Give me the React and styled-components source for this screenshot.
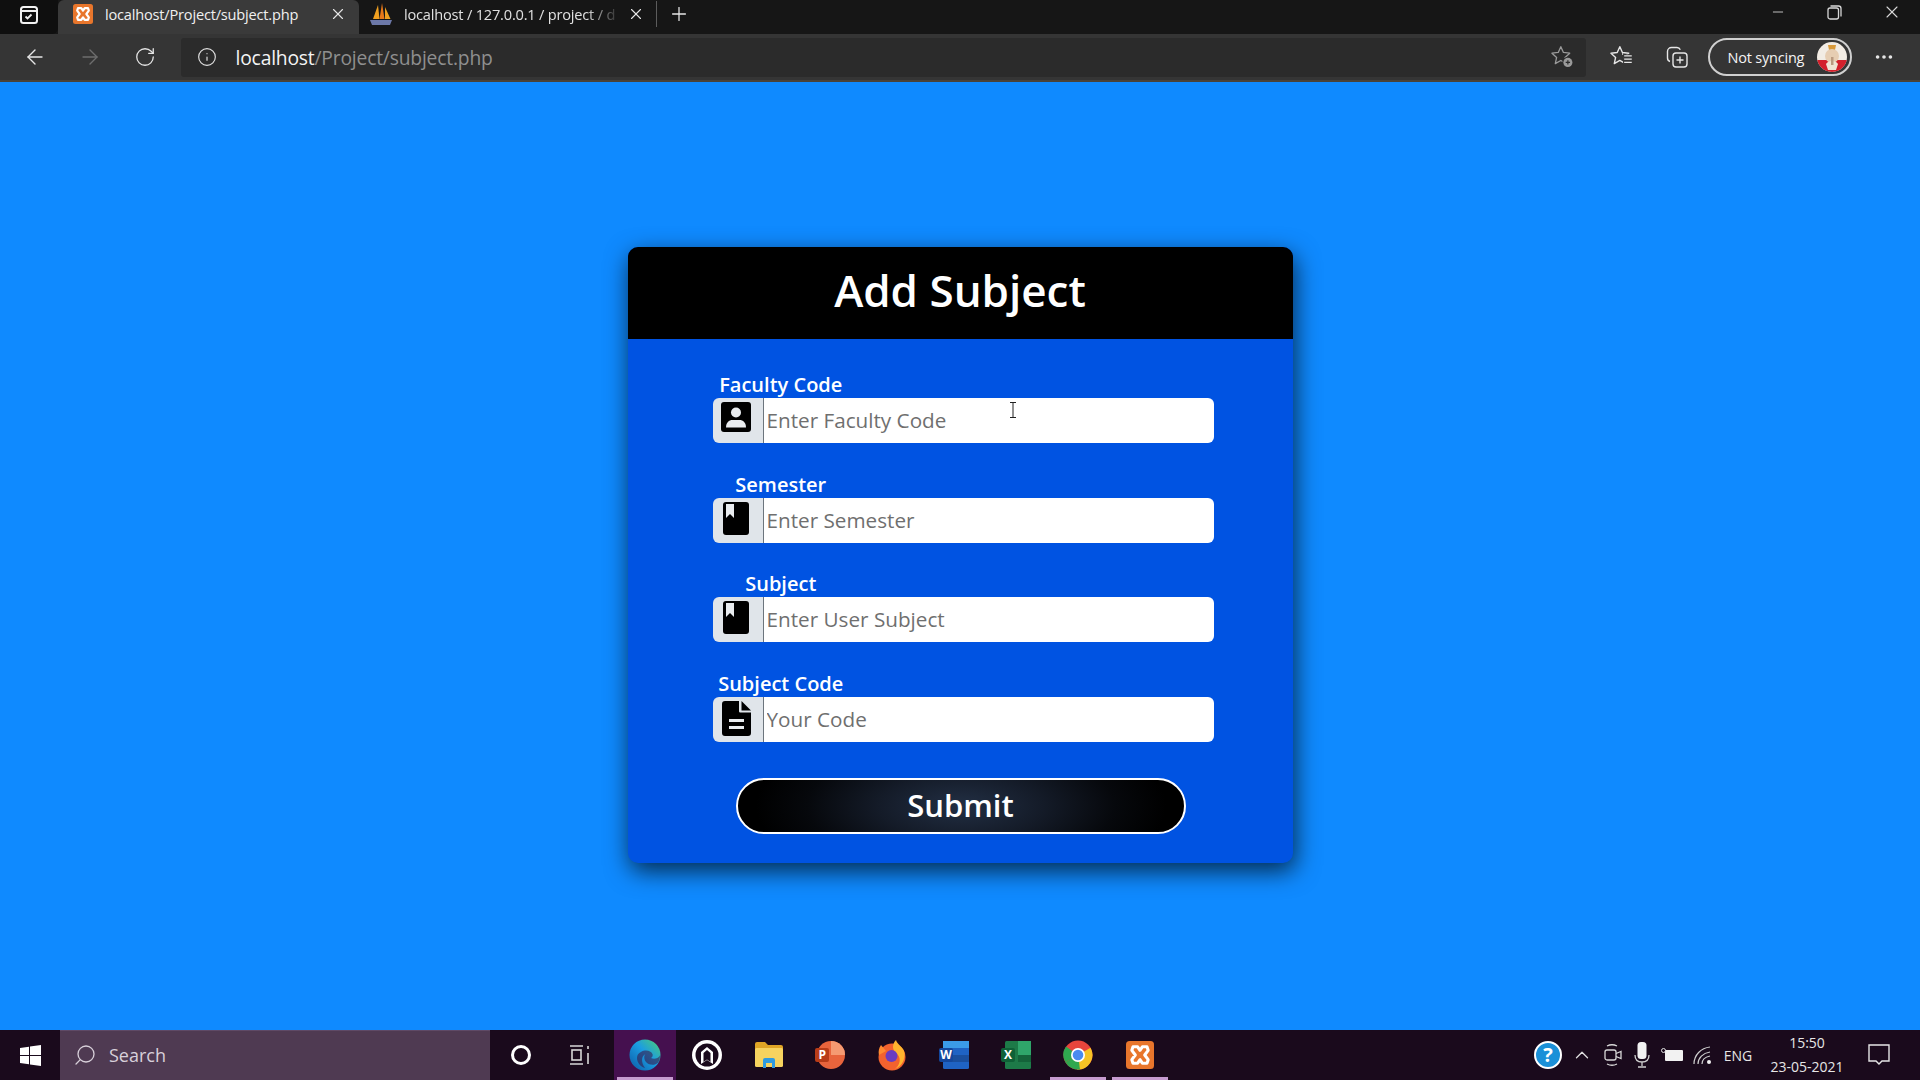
import React from 'react'
import styled, { createGlobalStyle } from 'styled-components'
import { ArrowLeft, ArrowRight, RotateCw, Info, X, Plus, Minus, ChevronUp, MoreHorizontal, Search } from 'lucide-react'

const GlobalStyle = createGlobalStyle`
  html, body { margin: 0; padding: 0; height: 100%; }
  body { font-family: "Open Sans", "Liberation Sans", sans-serif; background: #0f8aff; overflow: hidden; }
  #root { height: 100%; }
  * { box-sizing: border-box; }
`

const STAR = 'M10 2.500l2.400 5.300 5.800.7-4.300 3.900 1.200 5.700L10 15.200l-5.100 2.900 1.200-5.700L1.800 8.500l5.800-.7z'

function XamppIcon({ size = 20 }) {
  return (
    <svg width={size} height={size} viewBox="0 0 24 24">
      <rect x="0" y="0" width="24" height="24" rx="3" fill="#e8762c" />
      <path d="M6 5h4l2 3 2-3h4l1 3-3 4 3 4-1 3h-4l-2-3-2 3H6l-1-3 3-4-3-4z" fill="none" stroke="#fff" strokeWidth="2.6" strokeLinejoin="round" />
    </svg>
  )
}

function PmaIcon() {
  return (
    <svg width="22" height="22" viewBox="0 0 22 22">
      <path d="M3 16 8 2l1.500 14z" fill="#f0a020" />
      <path d="M9.500 16 12 0l2.500 16z" fill="#e87818" />
      <path d="M15 16 15 4l5.500 12z" fill="#f0a020" />
      <path d="M0 17h22l-2 5H2z" fill="#6c78a8" />
    </svg>
  )
}

function StarAddIcon() {
  return (
    <svg width="26" height="26" viewBox="0 0 24 24" fill="none" stroke="#9a9a9a" strokeWidth="1.200" strokeLinejoin="round">
      <path d={STAR} />
      <circle cx="16.500" cy="17" r="5.200" fill="#2b2b2b" stroke="none" />
      <circle cx="16.500" cy="17" r="4.200" fill="#9a9a9a" stroke="none" />
      <path d="M14.500 17h4M16.500 15v4" stroke="#2b2b2b" strokeWidth="1.100" />
    </svg>
  )
}

function FavoritesIcon() {
  return (
    <svg width="26" height="26" viewBox="0 0 24 24" fill="none" stroke="#e6e6e6" strokeWidth="1.300" strokeLinejoin="round">
      <path d={STAR} />
      <rect x="13" y="9.500" width="10" height="10" fill="#353535" stroke="none" />
      <path d="M14 11h7M14 14h7M14 17h7" />
      <path d="M12 9.200h1" />
    </svg>
  )
}

function CollectionsIcon() {
  return (
    <svg width="24" height="24" viewBox="0 0 24 24" fill="none" stroke="#e6e6e6" strokeWidth="1.400">
      <rect x="8" y="8" width="14" height="14" rx="3" />
      <path d="M15 11.500v7M11.500 15h7" />
      <path d="M5 16.500C3.500 16 2.500 14.800 2.500 13V6.500c0-2.200 1.800-4 4-4H12c1.500 0 2.700.8 3.300 2.200" />
    </svg>
  )
}

function RestoreIcon() {
  return (
    <svg width="15" height="15" viewBox="0 0 15 15" fill="none" stroke="#d8d8d8" strokeWidth="1.300">
      <rect x="1" y="3" width="10.500" height="11" rx="2" />
      <path d="M3.500 1h8c1.500 0 2.500 1 2.500 2.500v8" />
    </svg>
  )
}

function TabActionsIcon() {
  return (
    <svg width="18" height="18" viewBox="0 0 18 18">
      <rect x="1" y="1" width="16" height="16" rx="2.500" fill="none" stroke="#f2f2f2" strokeWidth="2" />
      <path d="M1 5h16" stroke="#f2f2f2" strokeWidth="2" />
      <path d="M5.500 10.500l2 2 4-4" fill="none" stroke="#f2f2f2" strokeWidth="1.800" />
    </svg>
  )
}

function ContactIcon() {
  return (
    <svg width="30" height="30" viewBox="0 0 30 30">
      <rect width="30" height="30" rx="3" fill="#000" />
      <circle cx="15" cy="10.500" r="5" fill="#e9ecef" />
      <path d="M5 25.500c0-5 3-7.500 6.500-7.500h7c3.500 0 6.500 2.500 6.500 7.500z" fill="#e9ecef" />
    </svg>
  )
}

function BookIcon() {
  return (
    <svg width="26" height="33" viewBox="0 0 26 33">
      <rect width="26" height="33" rx="3" fill="#000" />
      <path d="M3 2h8v14l-4-4-4 4z" fill="#e9ecef" />
    </svg>
  )
}

function FileIcon() {
  return (
    <svg width="29" height="35" viewBox="0 0 29 35">
      <path d="M3 0h14v10c0 1 .6 1.600 1.600 1.600H29V32a3 3 0 0 1-3 3H3a3 3 0 0 1-3-3V3a3 3 0 0 1 3-3z" fill="#000" />
      <path d="M19.500 0 29 9.500h-9.500z" fill="#000" />
      <path d="M7 18h15v3H7zM7 25h15v3H7z" fill="#e9ecef" />
    </svg>
  )
}

function EdgeIcon() {
  return (
    <svg width="32" height="32" viewBox="0 0 32 32">
      <defs>
        <linearGradient id="edgeA" x1="0" y1="1" x2="1" y2="0">
          <stop offset="0" stopColor="#0c59a4" />
          <stop offset=".55" stopColor="#1b9de2" />
          <stop offset="1" stopColor="#4fcf70" />
        </linearGradient>
      </defs>
      <circle cx="16" cy="16" r="15.500" fill="url(#edgeA)" />
      <path d="M12 13c4-2.500 10-1.500 11.500 2 .6 1.500 0 3-1.500 4 2.500 1.500 7 1 9-2.500 0 4-1.500 7-3 8-3 2-8 1.500-10.500-1-2.500-2.500-3-6.500-1-8.500-2 1-3.500 3-3.500 6 0 3 1.500 6 3 8-4-1-8-5-8-10 0-3 1.500-5 4-6z" fill="#3a1040" opacity=".55" />
    </svg>
  )
}

function GitIcon() {
  return (
    <svg width="32" height="32" viewBox="0 0 32 32">
      <circle cx="16" cy="16" r="15" fill="#fff" />
      <circle cx="16" cy="16" r="11.500" fill="#1a0a1c" />
      <path d="M10 25V13l6-5 6 5v12l-6-4z" fill="#fff" />
      <path d="M12.500 23V14l3.500-3 3.500 3v9L16 20.500z" fill="#1a0a1c" />
    </svg>
  )
}

function FolderIcon() {
  return (
    <svg width="30" height="28" viewBox="0 0 30 28">
      <path d="M1 3a2 2 0 0 1 2-2h8l3 3h13a2 2 0 0 1 2 2v3H1z" fill="#e0a526" />
      <rect x="1" y="7" width="28" height="19" rx="1.500" fill="#f7d35f" />
      <path d="M9 27v-8a2 2 0 0 1 2-2h8a2 2 0 0 1 2 2v8h-3v-5h-6v5z" fill="#2f9be0" />
    </svg>
  )
}

const AppLetter = styled.span`
  position: absolute;
  left: ${p => p.$left}px;
  top: 50%;
  transform: translateY(-50%);
  width: 14px;
  height: 14px;
  font-size: 12px;
  font-weight: 700;
  line-height: 14px;
  text-align: center;
  color: #fff;
  background: ${p => p.$bg};
  border-radius: 2px;
`

const OfficeBox = styled.div`
  position: relative;
  width: 30px;
  height: 30px;
`

function PowerPointIcon() {
  return (
    <OfficeBox>
      <svg width="30" height="30" viewBox="0 0 30 30">
        <circle cx="16" cy="15" r="14" fill="#e8643c" />
        <path d="M16 1a14 14 0 0 1 14 14H16z" fill="#f59a72" />
      </svg>
      <AppLetter $left={0} $bg="#b83c18">P</AppLetter>
    </OfficeBox>
  )
}

function WordIcon() {
  return (
    <OfficeBox>
      <svg width="30" height="30" viewBox="0 0 30 30">
        <rect x="4" y="1" width="26" height="28" rx="1.500" fill="#1f63c4" />
        <rect x="4" y="1" width="26" height="7" fill="#3b9be8" />
        <rect x="4" y="15" width="26" height="7" fill="#1a4f9e" />
      </svg>
      <AppLetter $left={0} $bg="#14479c">W</AppLetter>
    </OfficeBox>
  )
}

function ExcelIcon() {
  return (
    <OfficeBox>
      <svg width="30" height="30" viewBox="0 0 30 30">
        <rect x="4" y="1" width="26" height="28" rx="1.500" fill="#1d7a48" />
        <rect x="17" y="1" width="13" height="14" fill="#2fa56a" />
        <rect x="17" y="15" width="13" height="7" fill="#14633a" />
      </svg>
      <AppLetter $left={0} $bg="#0f6137">X</AppLetter>
    </OfficeBox>
  )
}

function FirefoxIcon() {
  return (
    <svg width="32" height="32" viewBox="0 0 32 32">
      <circle cx="16" cy="18" r="13.500" fill="#f2622e" />
      <path d="M20 1c1 4 6 6 8 11 2 6-1 15-9 18 5-4 6-10 3-14-2-3-5-4-5-8 0-3 1-5 3-7z" fill="#ffb52e" />
      <path d="M5 6c-2 3-3 6-2 10l7-4z" fill="#ff8a30" />
      <circle cx="15.500" cy="17" r="6" fill="#6a3cc0" />
    </svg>
  )
}

function ChromeIcon() {
  return (
    <svg width="30" height="30" viewBox="0 0 30 30">
      <circle cx="15" cy="15" r="14.500" fill="#e8453c" />
      <path d="M15 15 2.400 22.200A14.500 14.500 0 0 1 3 6.500z" fill="#2fa84f" />
      <path d="M15 15 27.500 7.800A14.500 14.500 0 0 1 14 29.500z" fill="#f7c325" />
      <path d="M15 15 2.400 22.200A14.500 14.500 0 0 0 17 29.400z" fill="#2fa84f" />
      <circle cx="15" cy="15" r="7" fill="#fff" />
      <circle cx="15" cy="15" r="5.300" fill="#4a8bf0" />
    </svg>
  )
}

function WindowsIcon() {
  return (
    <svg width="21" height="21" viewBox="0 0 21 21" fill="#fff">
      <path d="M0 3 9 1.700V10H0zM10 1.500 21 0v10H10zM0 11h9v8.300L0 18zM10 11h11v10l-11-1.500z" />
    </svg>
  )
}

function TaskViewIcon() {
  return (
    <svg width="22" height="22" viewBox="0 0 22 22" fill="none" stroke="#d8d8d8" strokeWidth="1.600">
      <path d="M1 2h13M1 20h13" />
      <rect x="3" y="6" width="9" height="10" />
      <path d="M19 2v3M19 9v11" />
    </svg>
  )
}

function CameraIcon() {
  return (
    <svg width="18" height="24" viewBox="0 0 18 24" fill="none" stroke="#d8d8d8" strokeWidth="1.300">
      <path d="M3 3c3-1.500 7-1.500 10 0M3 21c3 1.500 7 1.500 10 0" />
      <rect x="1" y="7" width="11" height="10" rx="2" />
      <path d="M12 10.500l5-2v7l-5-2" />
    </svg>
  )
}

function MicIcon() {
  return (
    <svg width="16" height="26" viewBox="0 0 16 26">
      <rect x="3.500" y="0" width="9" height="17" rx="3.500" fill="#f2f2f2" />
      <path d="M1 13c0 5 3 7 7 7s7-2 7-7M8 20v4M4 25h8" fill="none" stroke="#cfcfcf" strokeWidth="1.300" />
    </svg>
  )
}

function BatteryIcon() {
  return (
    <svg width="22" height="14" viewBox="0 0 22 14">
      <rect x="4" y="2" width="18" height="11" rx="1" fill="#f2f2f2" />
      <circle cx="2.500" cy="2.500" r="2" fill="none" stroke="#e0e0e0" />
    </svg>
  )
}

function WifiIcon() {
  return (
    <svg width="20" height="20" viewBox="0 0 20 20" fill="none" stroke="#cfcfcf" strokeWidth="1.200">
      <path d="M1 19C1 10 8 3 17 2M5 19c0-6 5-11 12-12M9 19c0-4 3-7 8-8" />
      <circle cx="16" cy="17" r="2" fill="#f2f2f2" stroke="none" />
    </svg>
  )
}

function NotificationIcon() {
  return (
    <svg width="22" height="22" viewBox="0 0 22 22" fill="none" stroke="#e6e6e6" strokeWidth="1.400">
      <path d="M1 1h20v16h-7l-3 3-3-3H1z" />
    </svg>
  )
}

function AvatarPicture() {
  return (
    <svg width="30" height="30" viewBox="0 0 30 30">
      <clipPath id="avatarClip"><circle cx="15" cy="15" r="15" /></clipPath>
      <g clipPath="url(#avatarClip)">
        <rect width="30" height="30" fill="#f2ece4" />
        <rect y="18" width="30" height="12" fill="#d3202c" />
        <path d="M11 3h8l-1 5h-6z" fill="#d99a3a" />
        <ellipse cx="15" cy="14" rx="7" ry="7" fill="#e6cdb2" />
        <path d="M9 22c2-4 10-4 12 0l-2 6h-8z" fill="#efe4d4" />
        <path d="M14 15h2.500v8H14z" fill="#b99a80" />
      </g>
    </svg>
  )
}

function TextCursor() {
  return (
    <svg width="8" height="16" viewBox="0 0 8 16" fill="none" stroke="#222" strokeWidth="1">
      <path d="M1 .5h6M1 15.500h6M4 .5v15" />
    </svg>
  )
}

function App() {
  const fields = [
    { label: 'Faculty Code', placeholder: 'Enter Faculty Code', icon: <ContactIcon />, cursor: true },
    { label: 'Semester', placeholder: 'Enter Semester', icon: <BookIcon /> },
    { label: 'Subject', placeholder: 'Enter User Subject', icon: <BookIcon /> },
    { label: 'Subject Code', placeholder: 'Your Code', icon: <FileIcon /> },
  ]

  return (
    <>
      <GlobalStyle />
      <Page>
        <TabStrip>
          <TabActions><TabActionsIcon /></TabActions>
          <ActiveTab>
            <XamppIcon />
            <TabTitle>localhost/Project/subject.php</TabTitle>
            <TabClose><X size={18} strokeWidth={1.5} /></TabClose>
          </ActiveTab>
          <OtherTab>
            <PmaIcon />
            <TabTitle $faded>localhost / 127.0.0.1 / project / d</TabTitle>
            <TabClose><X size={18} strokeWidth={1.5} /></TabClose>
          </OtherTab>
          <TabDivider />
          <NewTab><Plus size={22} strokeWidth={1.4} /></NewTab>
          <WindowControls>
            <WindowButton><Minus size={16} strokeWidth={1.3} /></WindowButton>
            <WindowButton><RestoreIcon /></WindowButton>
            <WindowButton><X size={20} strokeWidth={1.3} /></WindowButton>
          </WindowControls>
        </TabStrip>

        <Toolbar>
          <NavButton><ArrowLeft size={24} strokeWidth={1.4} /></NavButton>
          <NavButton $muted><ArrowRight size={24} strokeWidth={1.4} /></NavButton>
          <NavButton><RotateCw size={22} strokeWidth={1.4} /></NavButton>
          <AddressBar>
            <Info size={20} strokeWidth={1.4} color="#e0e0e0" />
            <Url><b>localhost</b>/Project/subject.php</Url>
            <StarAddIcon />
          </AddressBar>
          <ToolIcon $left={9}><FavoritesIcon /></ToolIcon>
          <ToolIcon><CollectionsIcon /></ToolIcon>
          <SyncPill>
            <span>Not syncing</span>
            <AvatarPicture />
          </SyncPill>
          <ToolIcon><MoreHorizontal size={22} strokeWidth={2} color="#e6e6e6" /></ToolIcon>
        </Toolbar>

        <Main>
          <Card>
            <CardHeader>Add Subject</CardHeader>
            <Form onSubmit={e => e.preventDefault()}>
              {fields.map(f => (
                <Field key={f.label}>
                  <FieldLabel>{f.label}</FieldLabel>
                  <InputGroup>
                    <Addon>{f.icon}</Addon>
                    <TextInput type="text" placeholder={f.placeholder} />
                    {f.cursor && <CursorMark><TextCursor /></CursorMark>}
                  </InputGroup>
                </Field>
              ))}
              <SubmitButton type="submit">Submit</SubmitButton>
            </Form>
          </Card>
        </Main>

        <Taskbar>
          <StartButton><WindowsIcon /></StartButton>
          <SearchBox>
            <SearchGlyph><Search size={24} strokeWidth={1.3} color="#d8d0da" /></SearchGlyph>
            Search
          </SearchBox>
          <TaskButton><Cortana /></TaskButton>
          <TaskButton $narrow><TaskViewIcon /></TaskButton>
          <TaskButton $active $open><EdgeIcon /></TaskButton>
          <TaskButton><GitIcon /></TaskButton>
          <TaskButton><FolderIcon /></TaskButton>
          <TaskButton><PowerPointIcon /></TaskButton>
          <TaskButton><FirefoxIcon /></TaskButton>
          <TaskButton><WordIcon /></TaskButton>
          <TaskButton><ExcelIcon /></TaskButton>
          <TaskButton $open><ChromeIcon /></TaskButton>
          <TaskButton $open><XamppIcon size={28} /></TaskButton>
          <Tray>
            <TrayCell $w={36}><HelpBadge>?</HelpBadge></TrayCell>
            <TrayCell $w={32}><ChevronUp size={22} strokeWidth={1.4} color="#e0e0e0" /></TrayCell>
            <TrayCell $w={30}><CameraIcon /></TrayCell>
            <TrayCell $w={27}><MicIcon /></TrayCell>
            <TrayCell $w={34}><BatteryIcon /></TrayCell>
            <TrayCell $w={28}><WifiIcon /></TrayCell>
            <TrayCell $w={42}>ENG</TrayCell>
            <Clock><span>15:50</span><span>23-05-2021</span></Clock>
            <TrayCell $w={48}><NotificationIcon /></TrayCell>
          </Tray>
        </Taskbar>
      </Page>
    </>
  )
}

export default App

const Page = styled.div`
  display: flex;
  flex-direction: column;
  height: 1080px;
`

const TabStrip = styled.div`
  display: flex;
  align-items: stretch;
  height: 34px;
  background: #161616;
  flex: none;
`

const TabActions = styled.div`
  width: 58px;
  display: flex;
  align-items: center;
  justify-content: center;
  padding-bottom: 4px;
  background: #0f0f0f;
  border-bottom-right-radius: 6px;
`

const ActiveTab = styled.div`
  width: 301px;
  display: flex;
  align-items: center;
  padding: 0 11px 6px 15px;
  background: #3a3a3a;
  border-radius: 6px 6px 0 0;
  color: #f0f0f0;
`

const OtherTab = styled.div`
  width: 297px;
  display: flex;
  align-items: center;
  padding: 0 10px 6px 11px;
  color: #e0e0e0;
`

const TabTitle = styled.span`
  flex: 1;
  margin-left: 12px;
  font-size: 14.6px;
  white-space: nowrap;
  overflow: hidden;
  letter-spacing: -0.2px;
  ${p => p.$faded && `
    -webkit-mask-image: linear-gradient(to right, #000 82%, transparent 98%);
    mask-image: linear-gradient(to right, #000 82%, transparent 98%);
  `}
`

const TabClose = styled.span`
  display: flex;
  width: 20px;
  justify-content: center;
  color: #e6e6e6;
`

const TabDivider = styled.div`
  width: 1px;
  height: 26px;
  margin-top: 1px;
  background: #5c5c5c;
`

const NewTab = styled.div`
  width: 44px;
  display: flex;
  align-items: center;
  justify-content: center;
  padding-bottom: 6px;
  color: #e6e6e6;
`

const WindowControls = styled.div`
  margin-left: auto;
  display: flex;
  padding-right: 0;
`

const WindowButton = styled.div`
  width: 57px;
  display: flex;
  align-items: center;
  justify-content: center;
  padding-bottom: 10px;
  color: #d8d8d8;
`

const Toolbar = styled.div`
  display: flex;
  align-items: center;
  height: 48px;
  padding: 0 9px 0 8px;
  background: #353535;
  border-bottom: 2px solid #4a4238;
  flex: none;
`

const NavButton = styled.div`
  width: 55px;
  display: flex;
  justify-content: center;
  color: ${p => (p.$muted ? '#6e6e6e' : '#e6e6e6')};
`

const AddressBar = styled.div`
  width: 1409px;
  height: 39px;
  margin-left: 8px;
  display: flex;
  align-items: center;
  padding: 0 10px 0 16px;
  background: #2b2b2b;
  border-radius: 3px;
`

const Url = styled.div`
  flex: 1;
  margin-left: 19px;
  font-size: 19.300px;
  letter-spacing: -0.2px;
  color: #8f8f8f;

  b {
    font-weight: 400;
    color: #f4f4f4;
  }
`

const ToolIcon = styled.div`
  width: 55px;
  display: flex;
  justify-content: center;
  margin-left: ${p => p.$left || 0}px;
`

const SyncPill = styled.div`
  width: 144px;
  height: 38px;
  margin: 0 4px;
  display: flex;
  align-items: center;
  justify-content: space-between;
  padding: 0 3px 0 17px;
  border: 2px solid #d0d0d0;
  border-radius: 19px;
  font-size: 14.5px;
  letter-spacing: -0.2px;
  color: #f4f4f4;
`

const Main = styled.main`
  flex: 1;
  display: flex;
  align-items: center;
  justify-content: center;
  padding-bottom: 2px;
  background: #0f8aff;
`

const Card = styled.section`
  width: 665px;
  height: 616px;
  border-radius: 10px;
  overflow: hidden;
  background: #0053e2;
  box-shadow: 2px 8px 24px rgba(0, 0, 0, 0.7);
`

const CardHeader = styled.h1`
  margin: 0;
  height: 92px;
  display: flex;
  align-items: center;
  justify-content: center;
  padding-bottom: 7px;
  background: #000;
  color: #fff;
  font-size: 44px;
  font-weight: 600;
`

const Form = styled.form`
  display: flex;
  flex-direction: column;
  padding: 30px 79px 0 85px;
`

const Field = styled.div`
  margin-bottom: 25.7px;
`

const FieldLabel = styled.label`
  display: block;
  width: 136.500px;
  height: 29px;
  line-height: 31px;
  text-align: center;
  white-space: nowrap;
  color: #fff;
  font-size: 20px;
  font-weight: 600;
`

const InputGroup = styled.div`
  position: relative;
  display: flex;
  height: 45px;
  border-radius: 6px;
  overflow: hidden;
`

const Addon = styled.div`
  width: 51px;
  flex: none;
  display: flex;
  align-items: flex-start;
  justify-content: center;
  padding-top: 4px;
  padding-right: 3px;
  background: #e0e5ea;
  border-right: 1px solid #6c757d;
`

const TextInput = styled.input`
  flex: 1;
  min-width: 0;
  border: none;
  outline: none;
  padding: 0 3px 1px;
  background: #fff;
  font-family: inherit;
  font-size: 20.700px;
  font-weight: 500;
  color: #333;

  &::placeholder {
    color: #6f6f6f;
    opacity: 1;
  }
`

const CursorMark = styled.span`
  position: absolute;
  left: 296px;
  top: 3px;
  pointer-events: none;
`

const SubmitButton = styled.button`
  width: 450px;
  height: 56px;
  margin: 10px 0 0 23px;
  padding-bottom: 3px;
  border: 2px solid #fff;
  border-radius: 28px;
  background: radial-gradient(ellipse 46% 160% at 50% 50%, #222f44 0%, #141b28 40%, #06080c 75%, #000 100%);
  color: #fff;
  font-family: inherit;
  font-size: 31px;
  font-weight: 600;
  cursor: pointer;
`

const Taskbar = styled.footer`
  display: flex;
  align-items: stretch;
  height: 50px;
  background: #1a0a1c;
  color: #e6e6e6;
  flex: none;
`

const StartButton = styled.div`
  width: 60px;
  display: flex;
  align-items: center;
  justify-content: center;
`

const SearchBox = styled.div`
  width: 430px;
  display: flex;
  align-items: center;
  padding: 0 0 2px 13px;
  background: #4f3a52;
  border-top: 1px solid #5f4a66;
  color: #d8d0da;
  font-size: 18px;
`

const SearchGlyph = styled.span`
  display: flex;
  margin-right: 12px;
  transform: scaleX(-1);
`

const TaskButton = styled.div`
  position: relative;
  width: 61.900px;
  display: flex;
  align-items: center;
  justify-content: center;
  padding-right: ${p => (p.$narrow ? 6 : 0)}px;
  background: ${p => (p.$active ? '#45104f' : 'transparent')};

  ${p => p.$open && `
    &::after {
      content: '';
      position: absolute;
      left: 3px;
      right: 3px;
      bottom: 0;
      height: 3px;
      background: #c69bd0;
    }
  `}
`

const Cortana = styled.div`
  width: 20px;
  height: 20px;
  border-radius: 50%;
  border: 3px solid #fff;
`

const Tray = styled.div`
  margin-left: auto;
  display: flex;
  padding-right: 17px;
  font-size: 14px;
`

const TrayCell = styled.div`
  width: ${p => p.$w}px;
  display: flex;
  align-items: center;
  justify-content: center;
`

const HelpBadge = styled.div`
  width: 28px;
  height: 28px;
  border-radius: 50%;
  border: 2px solid #fff;
  background: #1a90d8;
  color: #fff;
  font-size: 20px;
  font-weight: 700;
  line-height: 24px;
  text-align: center;
`

const Clock = styled.div`
  width: 96px;
  display: flex;
  flex-direction: column;
  align-items: center;
  justify-content: center;
  font-size: 14px;
  line-height: 24px;
`
